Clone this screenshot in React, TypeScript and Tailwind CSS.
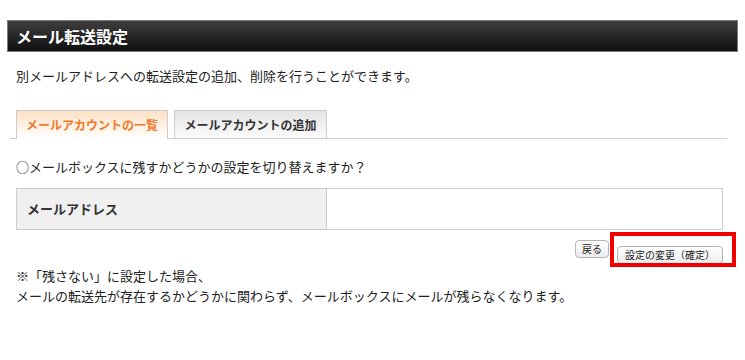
export default function App() {
  return (
    <div className="w-[745px] h-[360px] bg-white pt-[20px] text-[#222] font-['Noto_Sans_CJK_JP','Noto_Sans',sans-serif]">
      {/* Title bar */}
      <div className="mx-[7px] h-[32px] border border-[#7a7a7a] bg-gradient-to-b from-[#3e3e3e] to-[#111111] flex items-center pl-[8px]">
        <h1 className="text-white text-[16px] font-bold leading-none">メール転送設定</h1>
      </div>

      <p className="mt-[14px] pl-[16px] text-[13px] leading-[20px]">
        別メールアドレスへの転送設定の追加、削除を行うことができます。
      </p>

      {/* Tabs */}
      <div className="mt-[24px] ml-[10px] w-[717px] h-[29px] border-b border-[#cccccc] flex items-end pl-[6px] gap-[6px]">
        <div className="w-[152px] h-[29px] -mb-px border border-b-0 border-[#cccccc] bg-gradient-to-b from-[#fde2c6] to-white flex items-center justify-center">
          <span className="text-[12px] font-bold text-[#f2782c]">メールアカウントの一覧</span>
        </div>
        <div className="w-[153px] h-[28px] border border-b-0 border-[#cccccc] bg-gradient-to-b from-[#e4e4e4] to-[#fbfbfb] flex items-center justify-center">
          <span className="text-[12px] font-bold text-[#333]">メールアカウントの追加</span>
        </div>
      </div>

      <p className="mt-[18px] pl-[16px] text-[13px] leading-[20px]">
        ○メールボックスに残すかどうかの設定を切り替えますか？
      </p>

      {/* Table */}
      <div className="mt-[11px] ml-[16px] w-[707px] h-[42px] border border-[#cccccc] flex">
        <div className="w-[310px] bg-[#f0f0f0] border-r border-[#cccccc] flex items-center pl-[10px]">
          <span className="text-[13px] font-bold text-[#333]">メールアドレス</span>
        </div>
        <div className="flex-1 bg-white" />
      </div>

      {/* Buttons */}
      <div className="mt-[10px] h-[18px] flex items-start justify-end pr-[22px] gap-[8px]">
        <button className="h-[18px] px-[6px] rounded-[4px] border border-[#b5b5b5] bg-gradient-to-b from-white to-[#ececec] text-[10px] leading-none text-[#222]">
          戻る
        </button>
        <div className="relative h-[18px]">
          <button className="h-[18px] w-[106px] rounded-[4px] border border-[#b5b5b5] bg-gradient-to-b from-white to-[#ececec] text-[10px] leading-none text-[#222]">
            設定の変更（確定）
          </button>
          <div className="absolute left-[-7px] right-[-13px] top-[-8px] bottom-[-9px] border-[4px] border-[#f20000]" />
        </div>
      </div>

      {/* Note */}
      <div className="mt-[8px] pl-[16px] text-[13px] leading-[20px]">
        <p>※「残さない」に設定した場合、</p>
        <p>メールの転送先が存在するかどうかに関わらず、メールボックスにメールが残らなくなります。</p>
      </div>
    </div>
  )
}
